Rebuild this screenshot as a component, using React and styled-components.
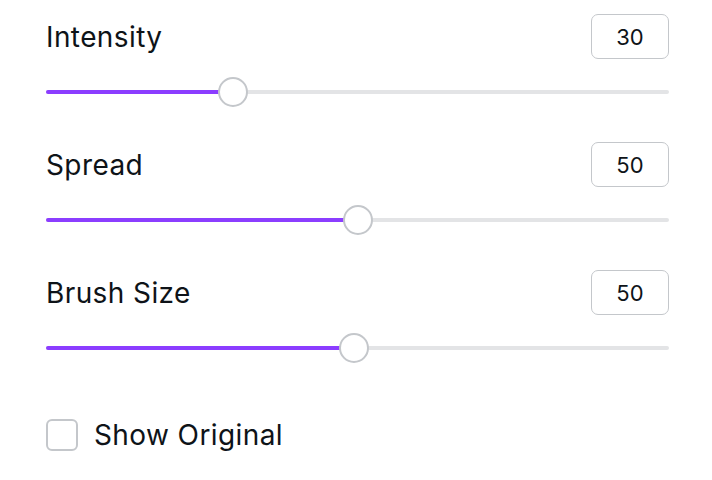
import styled, { createGlobalStyle } from "styled-components";

const Global = createGlobalStyle`
  body {
    margin: 0;
    background: #ffffff;
    font-family: "Inter", "Noto Sans", sans-serif;
    color: #0e1318;
  }
`;

const Panel = styled.div`
  width: 623px;
  padding: 14px 0 0 46px;
  display: flex;
  flex-direction: column;
`;

const Section = styled.div`
  display: flex;
  flex-direction: column;
  margin-bottom: 35px;
`;

const Header = styled.div`
  display: flex;
  justify-content: space-between;
  align-items: center;
  height: 45px;
`;

const Label = styled.span`
  font-size: 28px;
  line-height: 1;
  letter-spacing: 0.4px;
  color: #0e1318;
`;

const ValueBox = styled.input`
  box-sizing: border-box;
  width: 78px;
  height: 45px;
  border: 1.5px solid #c4c7cb;
  border-radius: 7px;
  background: #fff;
  text-align: center;
  font-family: "Inter", "Noto Sans", sans-serif;
  font-size: 22px;
  color: #0e1318;
  padding: 0;
  outline: none;
`;

const Slider = styled.div`
  position: relative;
  height: 30px;
  margin-top: 18px;
  display: flex;
  align-items: center;
`;

const Track = styled.div`
  position: relative;
  width: 100%;
  height: 4px;
  border-radius: 2px;
  background: #e3e4e6;
`;

const Fill = styled.div`
  height: 100%;
  border-radius: 2px;
  background: #8b3dff;
`;

const Thumb = styled.div`
  position: absolute;
  top: 0;
  box-sizing: border-box;
  width: 30px;
  height: 30px;
  margin-left: -15px;
  border-radius: 50%;
  background: #fff;
  border: 2px solid #c4c7cb;
`;

const CheckRow = styled.label`
  display: flex;
  align-items: center;
  gap: 16px;
  margin-top: 21px;
`;

const Box = styled.span`
  box-sizing: border-box;
  width: 32px;
  height: 32px;
  border: 2px solid #c4c7cb;
  border-radius: 6px;
  background: #fff;
`;

const SliderRow = ({ label, value, pct }) => (
  <Section>
    <Header>
      <Label>{label}</Label>
      <ValueBox value={value} readOnly />
    </Header>
    <Slider>
      <Track>
        <Fill style={{ width: `${pct}%` }} />
      </Track>
      <Thumb style={{ left: `${pct}%` }} />
    </Slider>
  </Section>
);

export default function App() {
  return (
    <>
      <Global />
      <Panel>
        <SliderRow label="Intensity" value="30" pct={30} />
        <SliderRow label="Spread" value="50" pct={50} />
        <SliderRow label="Brush Size" value="50" pct={49.4} />
        <CheckRow>
          <Box />
          <Label>Show Original</Label>
        </CheckRow>
      </Panel>
    </>
  );
}
